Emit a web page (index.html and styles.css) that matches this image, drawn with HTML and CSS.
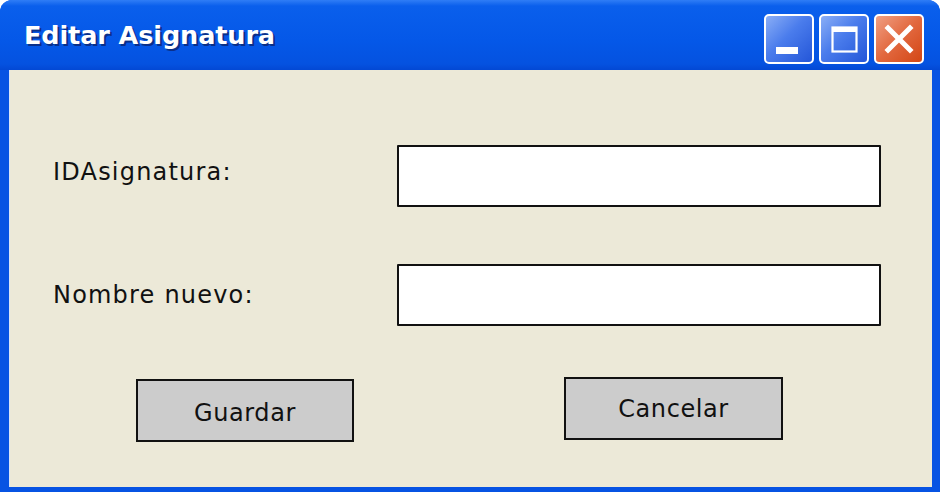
FILE: index.html
```html
<!DOCTYPE html>
<html>
<head>
<meta charset="utf-8">
<link rel="stylesheet" href="styles.css">
</head>
<body>
<div class="window">
  <div class="titlebar">
    <div class="title">Editar Asignatura</div>
    <div class="controls">
      <div class="ctl ctl-blue">
        <svg width="46" height="46" viewBox="0 0 46 46"><rect x="10" y="31" width="22" height="7" fill="#fff"/></svg>
      </div>
      <div class="ctl ctl-blue">
        <svg width="46" height="46" viewBox="0 0 46 46"><rect x="11" y="11" width="25" height="5" fill="#fff"/><rect x="11.5" y="11.5" width="24" height="24" fill="none" stroke="#fff" stroke-width="2.2"/></svg>
      </div>
      <div class="ctl ctl-red">
        <svg width="46" height="46" viewBox="0 0 46 46"><path d="M12 12 L34 34 M34 12 L12 34" stroke="#fff" stroke-width="5" stroke-linecap="square"/></svg>
      </div>
    </div>
  </div>
  <div class="body">
    <div class="form">
      <div class="label label-first">IDAsignatura:</div>
      <div class="field"></div>
      <div class="label">Nombre nuevo:</div>
      <div class="field"></div>
    </div>
    <div class="actions">
      <div class="btn btn-save">Guardar</div>
      <div class="btn btn-cancel">Cancelar</div>
    </div>
  </div>
</div>
</body>
</html>
```
FILE: styles.css
```css
html, body {
  margin: 0;
  padding: 0;
  background: #ffffff;
}
.window {
  width: 940px;
  height: 492px;
  box-sizing: border-box;
  background: #0753e3;
  border-radius: 12px 12px 0 0;
  display: flex;
  flex-direction: column;
  overflow: hidden;
}
.titlebar {
  height: 70px;
  flex: none;
  display: flex;
  align-items: center;
  justify-content: space-between;
  padding: 0 16px 0 24px;
  background: linear-gradient(to bottom, #2f7df6 0px, #0a5fec 6px, #0558e8 40px, #0552e0 64px, #0348d4 70px);
  box-sizing: border-box;
}
.title {
  font-family: "DejaVu Sans", sans-serif;
  font-weight: bold;
  font-size: 25.5px;
  color: #ffffff;
  text-shadow: 2px 2px 0 #0a2f8a;
  letter-spacing: -0.1px;
  margin-top: 0;
}
.controls {
  display: flex;
  gap: 5px;
  margin-top: 8px;
}
.ctl {
  width: 46px;
  height: 46px;
  border: 2px solid #ffffff;
  border-radius: 5px;
}
.ctl svg {
  display: block;
}
.ctl-blue {
  background: linear-gradient(135deg, #8aaef6 0%, #4a7cec 45%, #2456d8 100%);
}
.ctl-red {
  background: linear-gradient(135deg, #f0a084 0%, #e2683f 50%, #d34614 100%);
}
.body {
  flex: 1;
  margin: 0 8px 5px 9px;
  background: #ece9d8;
  border-left: 1px solid #d8e4f8;
  font-family: "DejaVu Sans", sans-serif;
  color: #111111;
}
.form {
  display: grid;
  grid-template-columns: 344px 484px;
  grid-auto-rows: 62px;
  row-gap: 57px;
  padding: 75px 0 0 43px;
  align-items: center;
}
.label {
  font-size: 24px;
  letter-spacing: 1.2px;
}
.label-first {
  margin-top: -9px;
}
.field {
  height: 62px;
  box-sizing: border-box;
  background: #ffffff;
  border: 2px solid #111111;
  border-radius: 1px;
}
.actions {
  display: flex;
  gap: 210px;
  padding: 53px 0 0 126px;
  align-items: flex-start;
}
.btn {
  width: 218px;
  height: 63px;
  box-sizing: border-box;
  background: #cccccc;
  border: 2px solid #111111;
  display: flex;
  align-items: center;
  justify-content: center;
  font-size: 24px;
  letter-spacing: 0.6px;
  color: #111111;
}
.btn-save {
  padding-top: 4px;
}
.btn-cancel {
  width: 219px;
  margin-top: -2px;
}
```
